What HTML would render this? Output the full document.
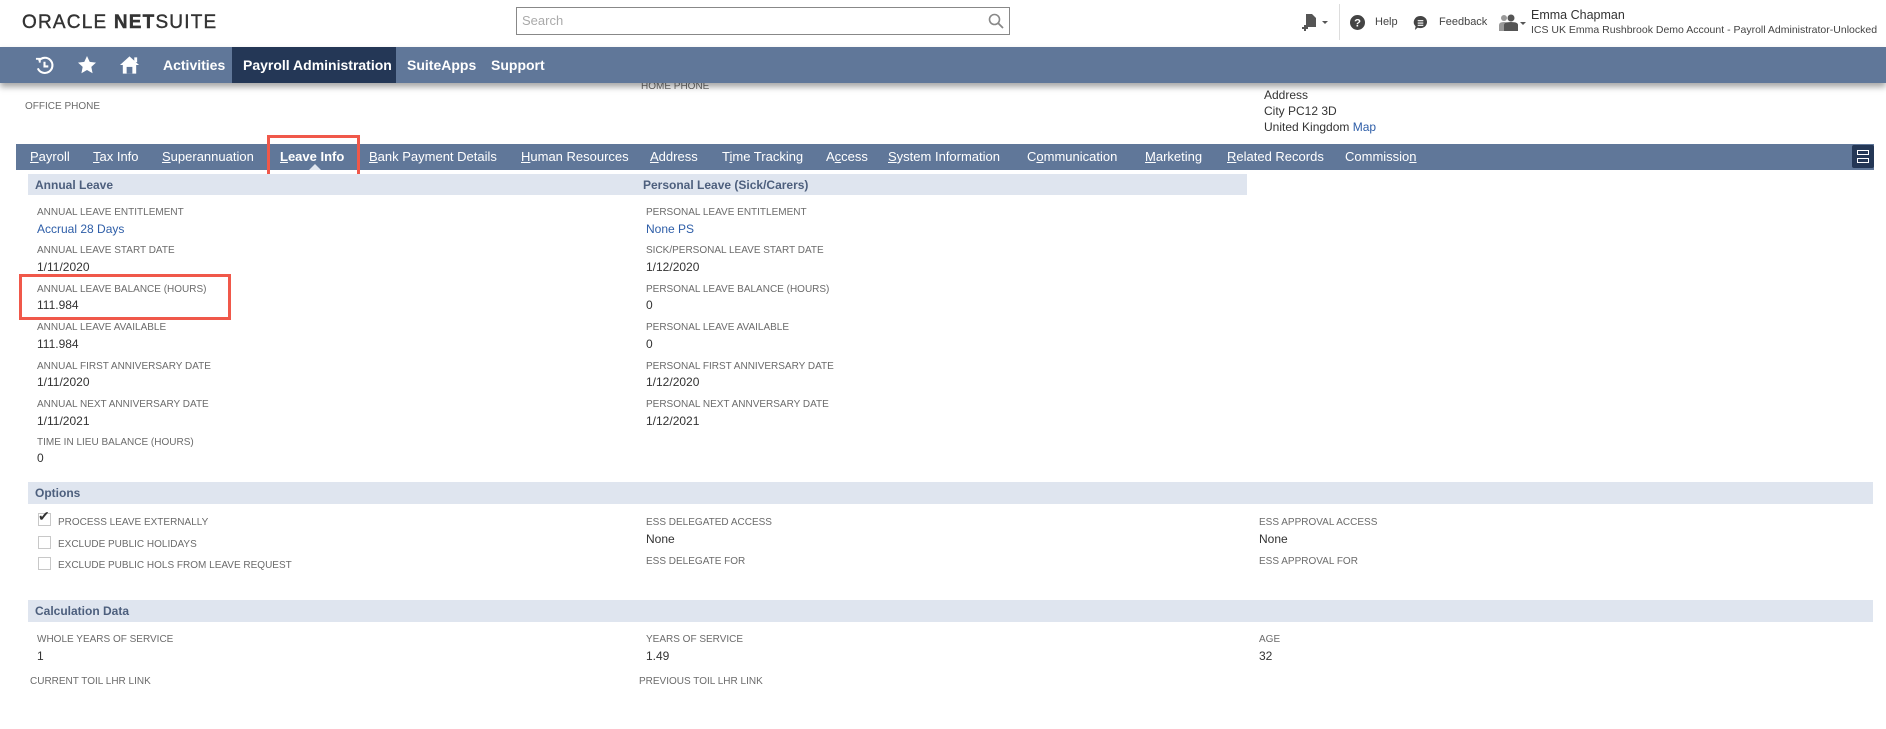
<!DOCTYPE html>
<html><head><meta charset="utf-8"><style>
*{margin:0;padding:0;box-sizing:border-box}
body{width:1886px;height:729px;overflow:hidden;background:#fff;font-family:"Liberation Sans",sans-serif;position:relative}
.a{position:absolute;white-space:nowrap}
.l{font-size:10px;color:#6b6b6b;line-height:14px}
.v{font-size:12px;color:#333;line-height:16px}
.lk{color:#2e5ea8}
.hd{position:absolute;background:#dfe5ef;}
.ht{position:absolute;font-size:12px;font-weight:bold;color:#4d5f7d;line-height:16px}
.tab{position:absolute;top:149px;font-size:13px;color:#fff;line-height:16px}
.nav{position:absolute;top:57px;font-size:14px;font-weight:bold;color:#fff;line-height:16px}
.cb{position:absolute;width:13px;height:13px;border:1px solid #c8c8c8;background:#fff}
</style></head><body>

<div class="a" style="left:22px;top:12px;font-size:19px;color:#333;letter-spacing:1.2px;line-height:22px;-webkit-text-stroke:0.4px #333">ORACLE <b>NET</b>SUITE</div>

<div class="a" style="left:516px;top:7px;width:494px;height:28px;border:1px solid #888;background:#fff"></div>
<div class="a" style="left:522px;top:13px;font-size:13px;color:#aaa">Search</div>
<svg class="a" style="left:988px;top:13px" width="16" height="16" viewBox="0 0 16 16"><circle cx="6.5" cy="6.5" r="5" fill="none" stroke="#888" stroke-width="1.6"/><path d="M10 10l5 5" stroke="#888" stroke-width="1.8"/></svg>

<svg class="a" style="left:1302px;top:13px" width="28" height="20" viewBox="0 0 28 20"><path d="M4 1h6l4 4v9H4z" fill="#555"/><path d="M3 12v6M0 15h6" stroke="#555" stroke-width="2"/><path d="M20 8l3 3 3-3z" fill="#555"/></svg>
<div class="a" style="left:1339px;top:4px;width:1px;height:36px;background:#ddd"></div>
<svg class="a" style="left:1350px;top:15px" width="15" height="15" viewBox="0 0 16 16"><circle cx="8" cy="8" r="8" fill="#444"/><text x="8" y="12.5" font-size="12" font-weight="bold" fill="#fff" text-anchor="middle" font-family="Liberation Sans">?</text></svg>
<div class="a" style="left:1375px;top:16px;font-size:11px;color:#444">Help</div>
<svg class="a" style="left:1413px;top:15px" width="15" height="16" viewBox="0 0 16 17"><path d="M8 1a7 6.5 0 1 1-3 12.4L2 16l.8-4A7 6.5 0 0 1 8 1z" fill="#444"/><path d="M5 6h6M5 8.5h6M5 11h6" stroke="#fff" stroke-width="1.2"/></svg>
<div class="a" style="left:1439px;top:16px;font-size:11px;color:#444">Feedback</div>
<svg class="a" style="left:1498px;top:13px" width="28" height="20" viewBox="0 0 28 20"><circle cx="6" cy="5" r="3" fill="#999"/><path d="M1 18v-6q0-3 5-3t5 3v6z" fill="#999"/><circle cx="13" cy="5" r="3.5" fill="#555"/><path d="M6 18v-6q0-3 7-3t7 3v6z" fill="#555"/><path d="M22 9l3 3 3-3z" fill="#555"/></svg>
<div class="a" style="left:1531px;top:8px;font-size:12.5px;color:#333">Emma Chapman</div>
<div class="a" style="left:1531px;top:24px;font-size:10.5px;color:#444">ICS UK Emma Rushbrook Demo Account - Payroll Administrator-Unlocked</div>

<div class="a l" style="left:641px;top:80px">HOME PHONE</div>
<div class="a" style="left:0;top:47px;width:1886px;height:36px;background:#607799;box-shadow:0 4px 6px rgba(0,0,0,0.35)"></div>
<div class="a" style="left:232px;top:47px;width:164px;height:36px;background:#243756"></div>
<svg class="a" style="left:35px;top:56px" width="19" height="19" viewBox="0 0 20 20"><path d="M4 5A8 8 0 1 1 3 13" fill="none" stroke="#fff" stroke-width="2.2"/><path d="M1 3l4 0 0 4" fill="none" stroke="#fff" stroke-width="2"/><path d="M10 6v5h4" fill="none" stroke="#fff" stroke-width="2.2"/></svg>
<svg class="a" style="left:78px;top:56px" width="18" height="18" viewBox="0 0 20 20"><path d="M10 0l3 6.5 7 .8-5.2 4.8 1.4 7L10 15.6 3.8 19.1l1.4-7L0 7.3l7-.8z" fill="#fff"/></svg>
<svg class="a" style="left:119px;top:55px" width="21" height="20" viewBox="0 0 22 20"><path d="M11 1L1 10h3v9h14v-9h3z" fill="#fff"/><rect x="16" y="2" width="3" height="5" fill="#fff"/><rect x="8" y="12" width="6" height="7" fill="#607799"/></svg>
<div class="nav" style="left:163px">Activities</div>
<div class="nav" style="left:243px">Payroll Administration</div>
<div class="nav" style="left:407px">SuiteApps</div>
<div class="nav" style="left:491px">Support</div>

<div class="a l" style="left:25px;top:100px">OFFICE PHONE</div>
<div class="a v" style="left:1264px;top:87px">Address</div>
<div class="a v" style="left:1264px;top:103px">City PC12 3D</div>
<div class="a v" style="left:1264px;top:119px">United Kingdom <span class="lk">Map</span></div>

<div class="a" style="left:16px;top:144px;width:1858px;height:26px;background:#607799"></div>
<div class="tab" style="left:30px"><u>P</u>ayroll</div>
<div class="tab" style="left:93px"><u>T</u>ax Info</div>
<div class="tab" style="left:162px"><u>S</u>uperannuation</div>
<div class="tab" style="left:280px;font-weight:bold"><u>L</u>eave Info</div>
<div class="a" style="left:309px;top:164px;width:0;height:0;border-left:6px solid transparent;border-right:6px solid transparent;border-bottom:6px solid #dfe5ef"></div>
<div class="tab" style="left:369px"><u>B</u>ank Payment Details</div>
<div class="tab" style="left:521px"><u>H</u>uman Resources</div>
<div class="tab" style="left:650px"><u>A</u>ddress</div>
<div class="tab" style="left:722px">T<u>i</u>me Tracking</div>
<div class="tab" style="left:826px">A<u>c</u>cess</div>
<div class="tab" style="left:888px"><u>S</u>ystem Information</div>
<div class="tab" style="left:1027px">C<u>o</u>mmunication</div>
<div class="tab" style="left:1145px"><u>M</u>arketing</div>
<div class="tab" style="left:1227px"><u>R</u>elated Records</div>
<div class="tab" style="left:1345px">Commissio<u>n</u></div>
<div class="a" style="left:1852px;top:145px;width:22px;height:23px;background:#243756;border-radius:2px"></div>
<div class="a" style="left:1857px;top:150px;width:12px;height:5px;border:1px solid #fff"></div>
<div class="a" style="left:1857px;top:158px;width:12px;height:5px;border:1px solid #fff"></div>
<div class="a" style="left:267px;top:135px;width:93px;height:42px;border:3px solid #f0584a"></div>

<div class="hd" style="left:28px;top:174px;width:1219px;height:21px"></div>
<div class="ht" style="left:35px;top:177px">Annual Leave</div>
<div class="ht" style="left:643px;top:177px">Personal Leave (Sick/Carers)</div>

<div class="a l" style="left:37px;top:206px">ANNUAL LEAVE ENTITLEMENT</div><div class="a v lk" style="left:37px;top:221px">Accrual 28 Days</div>
<div class="a l" style="left:37px;top:244px">ANNUAL LEAVE START DATE</div><div class="a v" style="left:37px;top:259px">1/11/2020</div>
<div class="a l" style="left:37px;top:283px">ANNUAL LEAVE BALANCE (HOURS)</div><div class="a v" style="left:37px;top:297px">111.984</div>
<div class="a l" style="left:37px;top:321px">ANNUAL LEAVE AVAILABLE</div><div class="a v" style="left:37px;top:336px">111.984</div>
<div class="a l" style="left:37px;top:360px">ANNUAL FIRST ANNIVERSARY DATE</div><div class="a v" style="left:37px;top:374px">1/11/2020</div>
<div class="a l" style="left:37px;top:398px">ANNUAL NEXT ANNIVERSARY DATE</div><div class="a v" style="left:37px;top:413px">1/11/2021</div>
<div class="a l" style="left:37px;top:436px">TIME IN LIEU BALANCE (HOURS)</div><div class="a v" style="left:37px;top:450px">0</div>

<div class="a l" style="left:646px;top:206px">PERSONAL LEAVE ENTITLEMENT</div><div class="a v lk" style="left:646px;top:221px">None PS</div>
<div class="a l" style="left:646px;top:244px">SICK/PERSONAL LEAVE START DATE</div><div class="a v" style="left:646px;top:259px">1/12/2020</div>
<div class="a l" style="left:646px;top:283px">PERSONAL LEAVE BALANCE (HOURS)</div><div class="a v" style="left:646px;top:297px">0</div>
<div class="a l" style="left:646px;top:321px">PERSONAL LEAVE AVAILABLE</div><div class="a v" style="left:646px;top:336px">0</div>
<div class="a l" style="left:646px;top:360px">PERSONAL FIRST ANNIVERSARY DATE</div><div class="a v" style="left:646px;top:374px">1/12/2020</div>
<div class="a l" style="left:646px;top:398px">PERSONAL NEXT ANNVERSARY DATE</div><div class="a v" style="left:646px;top:413px">1/12/2021</div>

<div class="a" style="left:19px;top:274px;width:212px;height:46px;border:3px solid #f0584a"></div>

<div class="hd" style="left:28px;top:482px;width:1845px;height:22px"></div>
<div class="ht" style="left:35px;top:485px">Options</div>
<div class="cb" style="left:38px;top:513px"></div>
<div class="a" style="left:38px;top:508px;font-size:14px;color:#333">✔</div>
<div class="a l" style="left:58px;top:516px">PROCESS LEAVE EXTERNALLY</div>
<div class="cb" style="left:38px;top:536px"></div>
<div class="a l" style="left:58px;top:538px">EXCLUDE PUBLIC HOLIDAYS</div>
<div class="cb" style="left:38px;top:557px"></div>
<div class="a l" style="left:58px;top:559px">EXCLUDE PUBLIC HOLS FROM LEAVE REQUEST</div>
<div class="a l" style="left:646px;top:516px">ESS DELEGATED ACCESS</div><div class="a v" style="left:646px;top:531px">None</div>
<div class="a l" style="left:646px;top:555px">ESS DELEGATE FOR</div>
<div class="a l" style="left:1259px;top:516px">ESS APPROVAL ACCESS</div><div class="a v" style="left:1259px;top:531px">None</div>
<div class="a l" style="left:1259px;top:555px">ESS APPROVAL FOR</div>

<div class="hd" style="left:28px;top:600px;width:1845px;height:22px"></div>
<div class="ht" style="left:35px;top:603px">Calculation Data</div>
<div class="a l" style="left:37px;top:633px">WHOLE YEARS OF SERVICE</div><div class="a v" style="left:37px;top:648px">1</div>
<div class="a l" style="left:646px;top:633px">YEARS OF SERVICE</div><div class="a v" style="left:646px;top:648px">1.49</div>
<div class="a l" style="left:1259px;top:633px">AGE</div><div class="a v" style="left:1259px;top:648px">32</div>
<div class="a l" style="left:30px;top:675px">CURRENT TOIL LHR LINK</div>
<div class="a l" style="left:639px;top:675px">PREVIOUS TOIL LHR LINK</div>
</body></html>
